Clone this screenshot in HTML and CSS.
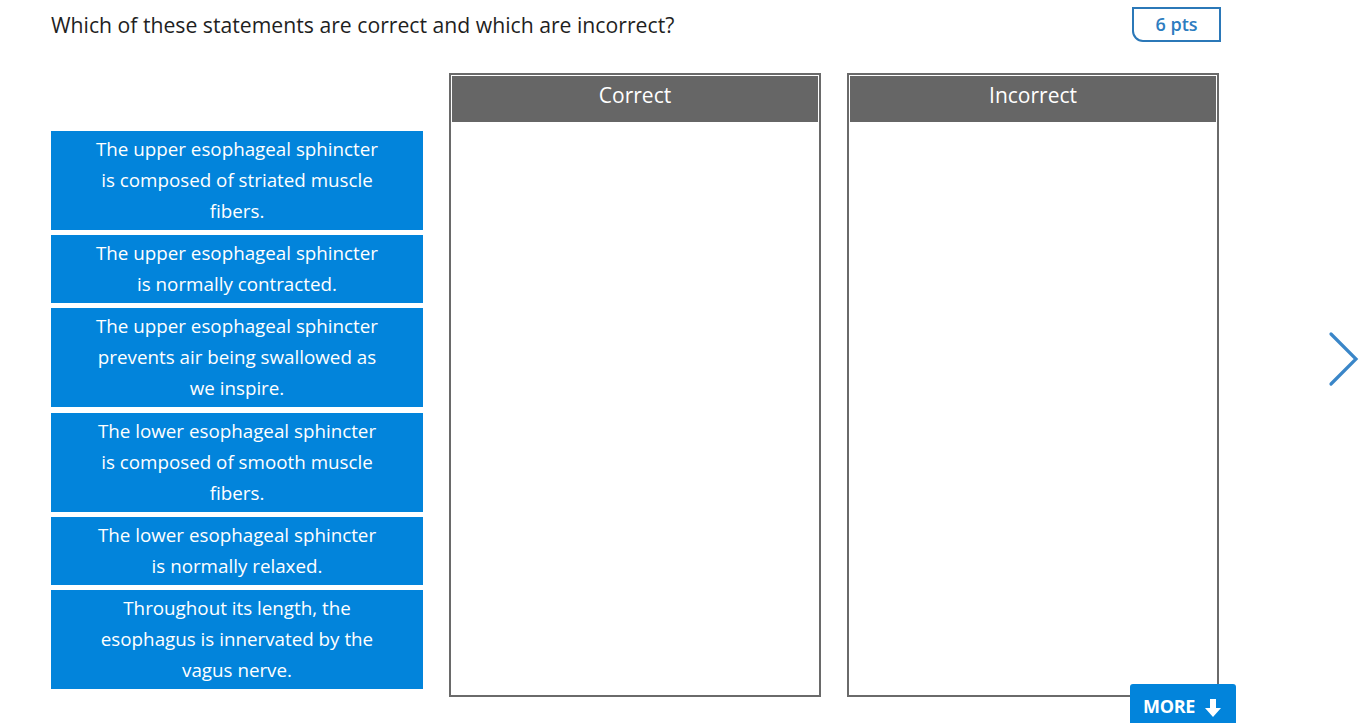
FILE: index.html
```html
<!DOCTYPE html>
<html>
<head>
<meta charset="utf-8">
<link rel="stylesheet" href="styles.css">
</head>
<body>
<div class="page">
  <div class="header">
    <div class="title">Which of these statements are correct and which are incorrect?</div>
    <div class="pts">6 pts</div>
  </div>
  <div class="main">
    <div class="cards">
      <div class="card">The upper esophageal sphincter is composed of striated muscle fibers.</div>
      <div class="card">The upper esophageal sphincter is normally contracted.</div>
      <div class="card">The upper esophageal sphincter prevents air being swallowed as we inspire.</div>
      <div class="card">The lower esophageal sphincter is composed of smooth muscle fibers.</div>
      <div class="card">The lower esophageal sphincter is normally relaxed.</div>
      <div class="card">Throughout its length, the esophagus is innervated by the vagus nerve.</div>
    </div>
    <div class="bucket">
      <div class="bucket-head">Correct</div>
    </div>
    <div class="bucket">
      <div class="bucket-head">Incorrect</div>
    </div>
    <svg class="chevron" width="32" height="56" viewBox="0 0 32 56">
      <polyline points="3,3 28,28 3,53" fill="none" stroke="#3a86c8" stroke-width="3.2" stroke-linecap="round" stroke-linejoin="miter"/>
    </svg>
  </div>
  <div class="more">MORE
    <svg class="arrow" width="18" height="20" viewBox="0 0 18 20">
      <path d="M6 1 H12 V10 H17 L9 19 L1 10 H6 Z" fill="#fff"/>
    </svg>
  </div>
</div>
</body>
</html>
```
FILE: styles.css
```css
html, body {
  margin: 0;
  padding: 0;
  background: #fff;
  font-family: "Open Sans", "Liberation Sans", sans-serif;
  overflow: hidden;
}
.page {
  position: relative;
  width: 1362px;
  height: 723px;
}
.header {
  display: flex;
  align-items: flex-start;
  padding: 7px 0 0 51px;
  height: 35px;
}
.title {
  font-size: 21.2px;
  line-height: 35px;
  color: #1f1f1f;
  width: 1081px;
}
.pts {
  box-sizing: border-box;
  width: 89px;
  height: 35px;
  border: 2px solid #2b78b8;
  border-bottom-left-radius: 11px;
  color: #2d7dc0;
  font-size: 18px;
  font-weight: 600;
  line-height: 31px;
  text-align: center;
}
.main {
  display: flex;
  align-items: flex-start;
  gap: 26px;
  padding: 31px 0 0 51px;
}
.cards {
  width: 372px;
  margin-top: 58px;
  display: flex;
  flex-direction: column;
  gap: 5.2px;
}
.card {
  background: #0284db;
  color: #fff;
  font-size: 18.8px;
  line-height: 31px;
  text-align: center;
  padding: 3px 40px;
  box-sizing: border-box;
}
.bucket {
  box-sizing: border-box;
  width: 372px;
  height: 624px;
  border: 2px solid #6a6a6a;
  padding: 1px;
}
.bucket-head {
  background: #666666;
  color: #fff;
  height: 46px;
  font-size: 21px;
  line-height: 38px;
  text-align: center;
}
.chevron {
  margin-left: auto;
  margin-top: 258px;
  margin-right: 2px;
}
.more {
  position: absolute;
  left: 1130px;
  top: 684px;
  width: 106px;
  height: 45px;
  background: #0284db;
  border-radius: 3px 3px 0 0;
  color: #fff;
  font-weight: 700;
  font-size: 18px;
  line-height: 45px;
  box-sizing: border-box;
  padding-left: 13px;
  display: flex;
  align-items: flex-start;
  gap: 9px;
  letter-spacing: -0.3px;
}
.arrow {
  margin-top: 14px;
}
```
